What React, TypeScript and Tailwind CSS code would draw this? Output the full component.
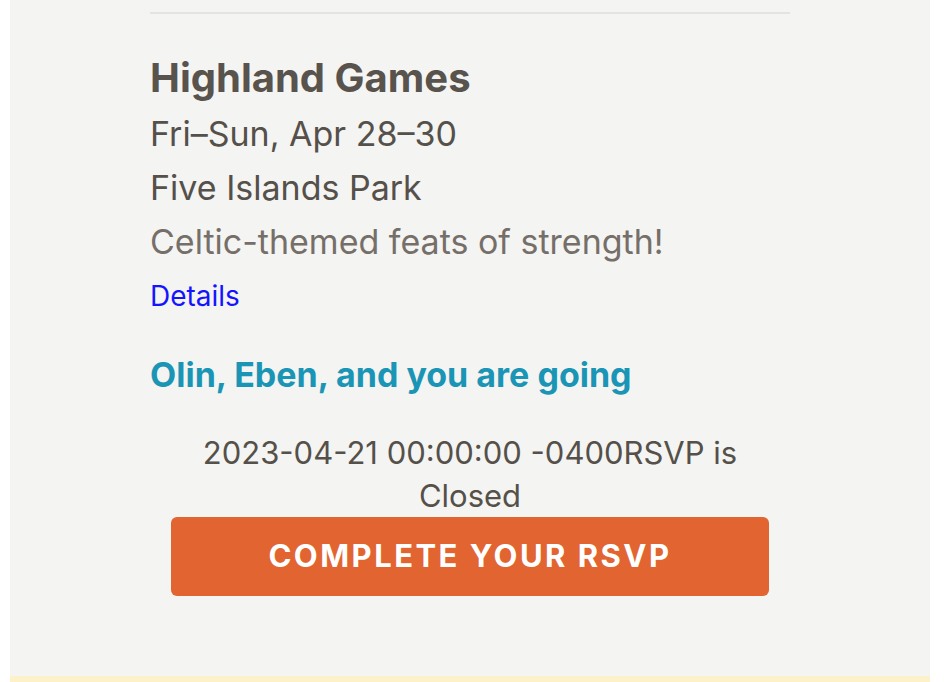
export default function App() {
  return (
    <div className="min-h-[682px] bg-white pl-[10px] pr-[14px] font-['Inter',sans-serif] text-[#55504a] antialiased">
      <div className="flex min-h-[682px] flex-col bg-[#f4f4f2]">
        <div className="mx-auto w-[640px] pt-[12px]">
          <div className="h-[2px] bg-[#e3e3e1]" />
          <h2 className="mt-[39px] text-[40px] font-bold leading-[50px] text-[#58534d]">Highland Games</h2>
          <p className="mt-[4px] text-[34px] leading-[54px]">Fri–Sun, Apr 28–30</p>
          <p className="text-[34px] leading-[54px]">Five Islands Park</p>
          <p className="text-[34px] leading-[54px] text-[#766f69]">Celtic-themed feats of strength!</p>
          <a href="#" className="block text-[28px] leading-[54px] text-[#1414ff]">
            Details
          </a>
          <p className="mt-[28px] text-[34px] font-bold leading-[48px] text-[#1b95b5]">
            Olin, Eben, and you are going
          </p>
          <div className="mx-auto mt-[32px] w-[598px]">
            <p className="text-center text-[31px] leading-[43px]">2023-04-21 00:00:00 -0400RSVP is Closed</p>
            <button
              type="button"
              className="flex h-[79px] w-full items-center justify-center rounded-[6px] bg-[#e26431] text-[31px] font-bold uppercase tracking-[0.08em] text-white"
            >
              Complete your RSVP
            </button>
          </div>
        </div>
        <div className="mt-auto h-[6px] bg-[#fdf1c9]" />
      </div>
    </div>
  );
}
